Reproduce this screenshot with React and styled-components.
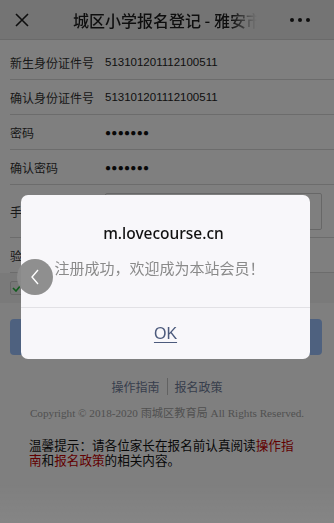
import React from 'react';
import styled, {createGlobalStyle} from 'styled-components';

const GlobalStyle = createGlobalStyle`
  html, body {
    margin: 0;
    padding: 0;
    background: #fff;
    font-family: "Noto Sans CJK SC", "Noto Sans", sans-serif;
  }
  #root {
    min-height: 523px;
  }
`;

const Page = styled.div`
  width: 334px;
  height: 523px;
  overflow: hidden;
  background: #fff;
  display: flex;
  flex-direction: column;
`;

const Header = styled.div`
  height: 40px;
  flex-shrink: 0;
  display: flex;
  align-items: center;
  background: #e9e9e9;
  border-bottom: 1px solid #d4d4d4;
  box-sizing: border-box;
`;

const HeaderIcon = styled.div`
  width: 60px;
  height: 40px;
  display: flex;
  align-items: center;
  justify-content: center;
  flex-shrink: 0;
  margin-left: -8px;
`;

const Title = styled.div`
  flex: 1;
  padding-left: 21px;
  font-size: 16px;
  font-weight: 500;
  color: #1c1c1c;
  white-space: nowrap;
  overflow: hidden;
  -webkit-mask-image: linear-gradient(to right, #000 82%, transparent 94%);
  mask-image: linear-gradient(to right, #000 82%, transparent 94%);
`;

const Dots = styled.div`
  width: 60px;
  display: flex;
  justify-content: center;
  gap: 4px;
  padding-right: 4px;

  span {
    width: 4px;
    height: 4px;
    border-radius: 50%;
    background: #1c1c1c;
  }
`;

const Form = styled.div`
  padding-top: 5px;
`;

const Row = styled.div`
  height: ${p => p.$h || 35}px;
  margin-left: 10px;
  display: flex;
  align-items: center;
  border-bottom: 1px solid #d8d8d8;
  box-sizing: border-box;
`;

const Label = styled.div`
  width: 95px;
  flex-shrink: 0;
  font-size: 12px;
  color: #333;
`;

const Value = styled.div`
  font-family: "Liberation Sans", Arial, sans-serif;
  font-size: 11.5px;
  color: #222;
`;

const Secret = styled.div`
  font-family: "Liberation Sans", Arial, sans-serif;
  font-size: 10px;
  letter-spacing: 0.3px;
  color: #111;
`;

const InputBox = styled.div`
  flex: 1;
  height: 35px;
  margin-right: 12px;
  border: 1px solid #cfcfcf;
  border-radius: 2px;
`;

const CheckRow = styled.div`
  height: 30px;
  padding-left: 10px;
  display: flex;
  align-items: center;
  background: #f4f4f4;
`;

const CheckBox = styled.div`
  width: 12px;
  height: 12px;
  border: 1px solid #cfcfcf;
  border-radius: 2px;
  background: #eee;
  display: flex;
  align-items: center;
  justify-content: center;
`;

const Submit = styled.div`
  margin: 16px 12px 0 10px;
  height: 36px;
  border-radius: 4px;
  background: #9cc3ff;
`;

const Links = styled.div`
  margin-top: 23px;
  display: flex;
  justify-content: center;
  align-items: center;
  font-size: 12px;
  color: #6f7c99;

  span + span {
    margin-left: 7px;
    padding-left: 7px;
    border-left: 1px solid #c4c4c4;
  }
`;

const Copyright = styled.div`
  margin-top: 9px;
  text-align: center;
  font-family: "Liberation Serif", "Noto Sans CJK SC", serif;
  font-size: 11.2px;
  color: #a2a2a2;
  white-space: nowrap;
`;

const Tip = styled.div`
  margin: 17px 39px 0 29px;
  font-size: 12.6px;
  line-height: 15px;
  color: #111;

  em {
    font-style: normal;
    color: #c40000;
  }
`;

const Overlay = styled.div`
  position: fixed;
  inset: 0;
  background: rgba(0, 0, 0, 0.5);
`;

const BottomGlow = styled.div`
  position: fixed;
  left: 0;
  right: 0;
  bottom: 0;
  height: 40px;
  background: linear-gradient(to bottom, rgba(255,255,255,0), rgba(255,255,255,0.05));
`;

const Dialog = styled.div`
  position: fixed;
  left: 21px;
  top: 195px;
  width: 289px;
  height: 164px;
  border-radius: 7px;
  background: #f8f7fa;
  display: flex;
  flex-direction: column;
  overflow: hidden;
`;

const DialogBody = styled.div`
  height: 113px;
  border-bottom: 1px solid #e2e1e5;
  display: flex;
  flex-direction: column;
  align-items: center;
  padding-top: 27px;
  box-sizing: border-box;
`;

const DialogTitle = styled.div`
  font-family: "Noto Sans", "Liberation Sans", sans-serif;
  font-size: 15.5px;
  font-weight: 500;
  color: #111;
  line-height: 22px;
  margin-right: 4px;
`;

const DialogText = styled.div`
  margin-top: 13px;
  margin-right: 12px;
  font-size: 15px;
  line-height: 22px;
  color: #8a8a8a;
`;

const DialogButton = styled.div`
  flex: 1;
  display: flex;
  align-items: center;
  justify-content: center;
  font-family: "Liberation Sans", Arial, sans-serif;
  font-size: 16px;
  color: #4c5a7c;
  text-decoration: underline;
  text-underline-offset: 3px;
`;

const BackButton = styled.div`
  position: fixed;
  left: 17px;
  top: 259px;
  width: 36px;
  height: 36px;
  border-radius: 50%;
  background: rgba(138, 138, 138, 0.96);
  display: flex;
  align-items: center;
  justify-content: center;
`;

export default function App() {
  return (
    <>
      <GlobalStyle />
      <Page>
        <Header>
          <HeaderIcon>
            <svg width="14" height="14" viewBox="0 0 14 14">
              <path d="M1 1 L13 13 M13 1 L1 13" stroke="#1c1c1c" strokeWidth="1.6" />
            </svg>
          </HeaderIcon>
          <Title>城区小学报名登记 - 雅安市雨城区</Title>
          <Dots><span /><span /><span /></Dots>
        </Header>
        <Form>
          <Row><Label>新生身份证件号</Label><Value>513101201112100511</Value></Row>
          <Row><Label>确认身份证件号</Label><Value>513101201112100511</Value></Row>
          <Row><Label>密码</Label><Secret>●●●●●●●</Secret></Row>
          <Row><Label>确认密码</Label><Secret>●●●●●●●</Secret></Row>
          <Row $h={53}><Label>手机号</Label><InputBox /></Row>
          <Row><Label>验证码</Label></Row>
        </Form>
        <CheckRow>
          <CheckBox>
            <svg width="10" height="8" viewBox="0 0 10 8">
              <path d="M1 4 L4 7 L9 1" stroke="#22b83a" strokeWidth="1.6" fill="none" />
            </svg>
          </CheckBox>
        </CheckRow>
        <Submit />
        <Links><span>操作指南</span><span>报名政策</span></Links>
        <Copyright>Copyright © 2018-2020 雨城区教育局 All Rights Reserved.</Copyright>
        <Tip>
          温馨提示：请各位家长在报名前认真阅读<em>操作指南</em>和<em>报名政策</em>的相关内容。
        </Tip>
      </Page>
      <Overlay />
      <BottomGlow />
      <Dialog>
        <DialogBody>
          <DialogTitle>m.lovecourse.cn</DialogTitle>
          <DialogText>注册成功，欢迎成为本站会员！</DialogText>
        </DialogBody>
        <DialogButton>OK</DialogButton>
      </Dialog>
      <BackButton>
        <svg width="12" height="18" viewBox="0 0 12 18">
          <path d="M9 2 L3 9 L9 16" stroke="#fff" strokeWidth="1.4" fill="none" />
        </svg>
      </BackButton>
    </>
  );
}
